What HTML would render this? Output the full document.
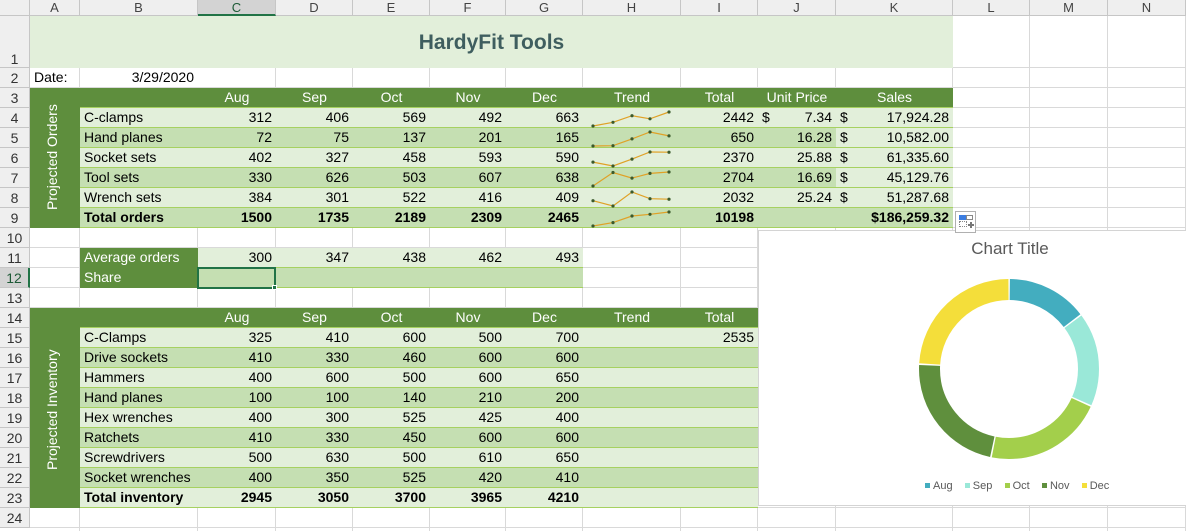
<!DOCTYPE html>
<html><head><meta charset="utf-8">
<style>
*{margin:0;padding:0;box-sizing:border-box}
html,body{width:1186px;height:531px;overflow:hidden}
body{background:#fff;font-family:"Liberation Sans",Arial,sans-serif;font-size:14px;color:#000;position:relative}
.a{position:absolute}
.vl{position:absolute;top:0;width:1px;height:531px;background:#d9d9d9}
.hl{position:absolute;left:0;height:1px;width:1186px;background:#d9d9d9}
.hdr{position:absolute;top:0;left:0;width:1186px;height:16px;background:#efefef;border-bottom:1px solid #c6c6c6}
.ch{position:absolute;top:0;height:16px;line-height:16px;text-align:center;font-size:13px;color:#444;border-right:1px solid #c6c6c6}
.rh{position:absolute;left:0;width:30px;background:#efefef;border-right:1px solid #c6c6c6;border-bottom:1px solid #c6c6c6;text-align:center;font-size:14px;color:#333;line-height:20px}
.row{position:absolute;left:0;width:1186px;height:20px;line-height:19px}
.row span{position:absolute;top:0;height:20px;white-space:nowrap;padding:0 4px}
.R{text-align:right}.C{text-align:center}
.cB{left:80px;width:118px}.cC{left:198px;width:78px}.cD{left:276px;width:77px}.cE{left:353px;width:77px}.cF{left:430px;width:76px}.cG{left:506px;width:77px}.cH{left:583px;width:98px}.cI{left:681px;width:77px}.cJ{left:758px;width:78px}.cK{left:836px;width:117px}
.dk{background:#5e8e3d}.lt{background:#e2efda;border-bottom:1px solid #a6d160}.md{background:#c5dfb2;border-bottom:1px solid #a6d160}
.w{color:#fff}.b{font-weight:bold}
</style></head><body>
<div class="vl" style="left:79px"></div><div class="vl" style="left:197px"></div><div class="vl" style="left:275px"></div><div class="vl" style="left:352px"></div><div class="vl" style="left:429px"></div><div class="vl" style="left:505px"></div><div class="vl" style="left:582px"></div><div class="vl" style="left:680px"></div><div class="vl" style="left:757px"></div><div class="vl" style="left:835px"></div><div class="vl" style="left:952px"></div><div class="vl" style="left:1029px"></div><div class="vl" style="left:1107px"></div><div class="vl" style="left:1185px"></div>
<div class="hl" style="top:67px"></div><div class="hl" style="top:87px"></div><div class="hl" style="top:107px"></div><div class="hl" style="top:127px"></div><div class="hl" style="top:147px"></div><div class="hl" style="top:167px"></div><div class="hl" style="top:187px"></div><div class="hl" style="top:207px"></div><div class="hl" style="top:227px"></div><div class="hl" style="top:247px"></div><div class="hl" style="top:267px"></div><div class="hl" style="top:287px"></div><div class="hl" style="top:307px"></div><div class="hl" style="top:327px"></div><div class="hl" style="top:347px"></div><div class="hl" style="top:367px"></div><div class="hl" style="top:387px"></div><div class="hl" style="top:407px"></div><div class="hl" style="top:427px"></div><div class="hl" style="top:447px"></div><div class="hl" style="top:467px"></div><div class="hl" style="top:487px"></div><div class="hl" style="top:507px"></div><div class="hl" style="top:527px"></div>

<div class="hdr"></div>
<div class="ch" style="left:0;width:30px"></div>
<div class="ch" style="left:30px;width:50px">A</div><div class="ch" style="left:80px;width:118px">B</div><div class="ch" style="left:198px;width:78px;background:#d3d3d3;border-bottom:2px solid #217346;color:#1d5a36">C</div><div class="ch" style="left:276px;width:77px">D</div><div class="ch" style="left:353px;width:77px">E</div><div class="ch" style="left:430px;width:76px">F</div><div class="ch" style="left:506px;width:77px">G</div><div class="ch" style="left:583px;width:98px">H</div><div class="ch" style="left:681px;width:77px">I</div><div class="ch" style="left:758px;width:78px">J</div><div class="ch" style="left:836px;width:117px">K</div><div class="ch" style="left:953px;width:77px">L</div><div class="ch" style="left:1030px;width:78px">M</div><div class="ch" style="left:1108px;width:78px">N</div>

<div class="rh" style="top:16px;height:52px;line-height:86px">1</div>
<div class="rh" style="top:68px;height:20px">2</div><div class="rh" style="top:88px;height:20px">3</div><div class="rh" style="top:108px;height:20px">4</div><div class="rh" style="top:128px;height:20px">5</div><div class="rh" style="top:148px;height:20px">6</div><div class="rh" style="top:168px;height:20px">7</div><div class="rh" style="top:188px;height:20px">8</div><div class="rh" style="top:208px;height:20px">9</div><div class="rh" style="top:228px;height:20px">10</div><div class="rh" style="top:248px;height:20px">11</div><div class="rh" style="top:268px;height:20px;background:#d3d3d3;border-right:2px solid #217346;color:#1d5a36">12</div><div class="rh" style="top:288px;height:20px">13</div><div class="rh" style="top:308px;height:20px">14</div><div class="rh" style="top:328px;height:20px">15</div><div class="rh" style="top:348px;height:20px">16</div><div class="rh" style="top:368px;height:20px">17</div><div class="rh" style="top:388px;height:20px">18</div><div class="rh" style="top:408px;height:20px">19</div><div class="rh" style="top:428px;height:20px">20</div><div class="rh" style="top:448px;height:20px">21</div><div class="rh" style="top:468px;height:20px">22</div><div class="rh" style="top:488px;height:20px">23</div><div class="rh" style="top:508px;height:20px">24</div>

<div class="a" style="left:30px;top:16px;width:923px;height:52px;background:#e2efda;text-align:center;line-height:54px;font-size:21px;font-weight:bold;color:#3f5e5f">HardyFit Tools</div>
<div class="row" style="top:68px"><span style="left:30px;width:50px">Date:</span><span class="cB R" style="background:#fff;height:19px">3/29/2020</span></div>

<div class="a dk" style="left:30px;top:88px;width:50px;height:140px"></div>
<div class="a dk" style="left:80px;top:88px;width:873px;height:20px;border-bottom:1px solid #a6d160"></div>
<div class="a lt" style="left:80px;top:108px;width:873px;height:20px"></div>
<div class="a md" style="left:80px;top:128px;width:756px;height:20px"></div><div class="a lt" style="left:836px;top:128px;width:117px;height:20px"></div>
<div class="a lt" style="left:80px;top:148px;width:873px;height:20px"></div>
<div class="a md" style="left:80px;top:168px;width:756px;height:20px"></div><div class="a lt" style="left:836px;top:168px;width:117px;height:20px"></div>
<div class="a lt" style="left:80px;top:188px;width:873px;height:20px"></div>
<div class="a md" style="left:80px;top:208px;width:873px;height:20px"></div>
<div class="a w" style="left:44px;top:210px;width:20px;height:16px;transform-origin:0 0;transform:rotate(-90deg);white-space:nowrap;font-size:14px;line-height:16px">Projected Orders</div>

<div class="row w" style="top:88px"><span class="cC C">Aug</span><span class="cD C">Sep</span><span class="cE C">Oct</span><span class="cF C">Nov</span><span class="cG C">Dec</span><span class="cH C">Trend</span><span class="cI C">Total</span><span class="cJ C">Unit Price</span><span class="cK C">Sales</span></div>
<div class="row" style="top:108px"><span class="cB">C-clamps</span><span class="cC R">312</span><span class="cD R">406</span><span class="cE R">569</span><span class="cF R">492</span><span class="cG R">663</span><span class="cI R">2442</span><span class="cJ">$</span><span class="cJ R">7.34</span><span class="cK">$</span><span class="cK R">17,924.28</span></div>
<div class="row" style="top:128px"><span class="cB">Hand planes</span><span class="cC R">72</span><span class="cD R">75</span><span class="cE R">137</span><span class="cF R">201</span><span class="cG R">165</span><span class="cI R">650</span><span class="cJ R">16.28</span><span class="cK">$</span><span class="cK R">10,582.00</span></div>
<div class="row" style="top:148px"><span class="cB">Socket sets</span><span class="cC R">402</span><span class="cD R">327</span><span class="cE R">458</span><span class="cF R">593</span><span class="cG R">590</span><span class="cI R">2370</span><span class="cJ R">25.88</span><span class="cK">$</span><span class="cK R">61,335.60</span></div>
<div class="row" style="top:168px"><span class="cB">Tool sets</span><span class="cC R">330</span><span class="cD R">626</span><span class="cE R">503</span><span class="cF R">607</span><span class="cG R">638</span><span class="cI R">2704</span><span class="cJ R">16.69</span><span class="cK">$</span><span class="cK R">45,129.76</span></div>
<div class="row" style="top:188px"><span class="cB">Wrench sets</span><span class="cC R">384</span><span class="cD R">301</span><span class="cE R">522</span><span class="cF R">416</span><span class="cG R">409</span><span class="cI R">2032</span><span class="cJ R">25.24</span><span class="cK">$</span><span class="cK R">51,287.68</span></div>
<div class="row b" style="top:208px"><span class="cB">Total orders</span><span class="cC R">1500</span><span class="cD R">1735</span><span class="cE R">2189</span><span class="cF R">2309</span><span class="cG R">2465</span><span class="cI R">10198</span><span class="cK R">$186,259.32</span></div>

<svg class="a" style="left:0;top:0" width="1186" height="531">
<g fill="none" stroke="#e0a126" stroke-width="1.2">
<polyline points="593,126 613,122.3 632,115.7 650,118.8 669,112"/>
<polyline points="593,146 613,145.7 632,138.9 650,132 669,135.9"/>
<polyline points="593,162.1 613,166 632,159.1 650,152 669,152.2"/>
<polyline points="593,186 613,172.5 632,178.1 650,173.4 669,172"/>
<polyline points="593,200.7 613,206 632,192 650,198.7 669,199.2"/>
<polyline points="593,226 613,222.6 632,216 650,214.3 669,212"/>
</g>
<g fill="#3b5a2c">
<circle cx="593" cy="126" r="1.6"/><circle cx="613" cy="122.3" r="1.6"/><circle cx="632" cy="115.7" r="1.6"/><circle cx="650" cy="118.8" r="1.6"/><circle cx="669" cy="112" r="1.6"/>
<circle cx="593" cy="146" r="1.6"/><circle cx="613" cy="145.7" r="1.6"/><circle cx="632" cy="138.9" r="1.6"/><circle cx="650" cy="132" r="1.6"/><circle cx="669" cy="135.9" r="1.6"/>
<circle cx="593" cy="162.1" r="1.6"/><circle cx="613" cy="166" r="1.6"/><circle cx="632" cy="159.1" r="1.6"/><circle cx="650" cy="152" r="1.6"/><circle cx="669" cy="152.2" r="1.6"/>
<circle cx="593" cy="186" r="1.6"/><circle cx="613" cy="172.5" r="1.6"/><circle cx="632" cy="178.1" r="1.6"/><circle cx="650" cy="173.4" r="1.6"/><circle cx="669" cy="172" r="1.6"/>
<circle cx="593" cy="200.7" r="1.6"/><circle cx="613" cy="206" r="1.6"/><circle cx="632" cy="192" r="1.6"/><circle cx="650" cy="198.7" r="1.6"/><circle cx="669" cy="199.2" r="1.6"/>
<circle cx="593" cy="226" r="1.6"/><circle cx="613" cy="222.6" r="1.6"/><circle cx="632" cy="216" r="1.6"/><circle cx="650" cy="214.3" r="1.6"/><circle cx="669" cy="212" r="1.6"/>
</g>
</svg>

<div class="a dk" style="left:80px;top:248px;width:118px;height:40px"></div>
<div class="a lt" style="left:198px;top:248px;width:385px;height:20px"></div>
<div class="a md" style="left:198px;top:268px;width:385px;height:20px"></div>
<div class="row" style="top:248px"><span class="cB w">Average orders</span><span class="cC R">300</span><span class="cD R">347</span><span class="cE R">438</span><span class="cF R">462</span><span class="cG R">493</span></div>
<div class="row" style="top:268px"><span class="cB w">Share</span></div>
<div class="a" style="left:197px;top:267px;width:79px;height:22px;border:2px solid #217346"></div>
<div class="a" style="left:272px;top:285px;width:5px;height:5px;background:#217346;border:1px solid #fff"></div>

<div class="a dk" style="left:30px;top:308px;width:50px;height:200px"></div>
<div class="a dk" style="left:80px;top:308px;width:678px;height:20px;border-bottom:1px solid #a6d160"></div>
<div class="a lt" style="left:80px;top:328px;width:678px;height:20px"></div>
<div class="a md" style="left:80px;top:348px;width:678px;height:20px"></div>
<div class="a lt" style="left:80px;top:368px;width:678px;height:20px"></div>
<div class="a md" style="left:80px;top:388px;width:678px;height:20px"></div>
<div class="a lt" style="left:80px;top:408px;width:678px;height:20px"></div>
<div class="a md" style="left:80px;top:428px;width:678px;height:20px"></div>
<div class="a lt" style="left:80px;top:448px;width:678px;height:20px"></div>
<div class="a md" style="left:80px;top:468px;width:678px;height:20px"></div>
<div class="a lt" style="left:80px;top:488px;width:678px;height:20px"></div>
<div class="a w" style="left:44px;top:470px;width:20px;height:16px;transform-origin:0 0;transform:rotate(-90deg);white-space:nowrap;font-size:14px;line-height:16px">Projected Inventory</div>

<div class="row w" style="top:308px"><span class="cC C">Aug</span><span class="cD C">Sep</span><span class="cE C">Oct</span><span class="cF C">Nov</span><span class="cG C">Dec</span><span class="cH C">Trend</span><span class="cI C">Total</span></div>
<div class="row" style="top:328px"><span class="cB">C-Clamps</span><span class="cC R">325</span><span class="cD R">410</span><span class="cE R">600</span><span class="cF R">500</span><span class="cG R">700</span><span class="cI R">2535</span></div>
<div class="row" style="top:348px"><span class="cB">Drive sockets</span><span class="cC R">410</span><span class="cD R">330</span><span class="cE R">460</span><span class="cF R">600</span><span class="cG R">600</span></div>
<div class="row" style="top:368px"><span class="cB">Hammers</span><span class="cC R">400</span><span class="cD R">600</span><span class="cE R">500</span><span class="cF R">600</span><span class="cG R">650</span></div>
<div class="row" style="top:388px"><span class="cB">Hand planes</span><span class="cC R">100</span><span class="cD R">100</span><span class="cE R">140</span><span class="cF R">210</span><span class="cG R">200</span></div>
<div class="row" style="top:408px"><span class="cB">Hex wrenches</span><span class="cC R">400</span><span class="cD R">300</span><span class="cE R">525</span><span class="cF R">425</span><span class="cG R">400</span></div>
<div class="row" style="top:428px"><span class="cB">Ratchets</span><span class="cC R">410</span><span class="cD R">330</span><span class="cE R">450</span><span class="cF R">600</span><span class="cG R">600</span></div>
<div class="row" style="top:448px"><span class="cB">Screwdrivers</span><span class="cC R">500</span><span class="cD R">630</span><span class="cE R">500</span><span class="cF R">610</span><span class="cG R">650</span></div>
<div class="row" style="top:468px"><span class="cB">Socket wrenches</span><span class="cC R">400</span><span class="cD R">350</span><span class="cE R">525</span><span class="cF R">420</span><span class="cG R">410</span></div>
<div class="row b" style="top:488px"><span class="cB">Total inventory</span><span class="cC R">2945</span><span class="cD R">3050</span><span class="cE R">3700</span><span class="cF R">3965</span><span class="cG R">4210</span></div>

<div class="a" style="left:758px;top:230px;width:430px;height:276px;background:#fff;border:1px solid #d4d4d4"></div>
<div class="a" style="left:955px;top:211px;width:21px;height:22px;background:#fff;border:1px solid #b0b0b0">
<div class="a" style="left:3px;top:3px;width:7px;height:5px;background:#3c7de0"></div>
<div class="a" style="left:10px;top:3px;width:7px;height:5px;border:1px solid #888"></div>
<div class="a" style="left:3px;top:9px;width:8px;height:6px;border:1px dotted #888"></div>
<div class="a" style="left:12px;top:12px;width:6px;height:2px;background:#777"></div>
<div class="a" style="left:14px;top:10px;width:2px;height:6px;background:#777"></div>
</div>
<div class="a" style="left:910px;top:239px;width:200px;text-align:center;font-size:17px;color:#595959">Chart Title</div>
<svg class="a" style="left:909px;top:269px" width="200" height="200">
<g fill="none" stroke-width="21" transform="rotate(-90 100 100)">
<circle cx="100" cy="100" r="79.5" stroke="#43adbf" stroke-dasharray="72 500" stroke-dashoffset="-0.8"/>
<circle cx="100" cy="100" r="79.5" stroke="#9ae8d8" stroke-dasharray="83.5 500" stroke-dashoffset="-74.3"/>
<circle cx="100" cy="100" r="79.5" stroke="#a3cf4b" stroke-dasharray="105.7 500" stroke-dashoffset="-159.3"/>
<circle cx="100" cy="100" r="79.5" stroke="#5f8f3d" stroke-dasharray="111.6 500" stroke-dashoffset="-266.5"/>
<circle cx="100" cy="100" r="79.5" stroke="#f4de3a" stroke-dasharray="119.2 500" stroke-dashoffset="-379.6"/>
</g>
</svg>
<div class="a" style="left:925px;top:479px;font-size:11px;color:#595959;white-space:nowrap;line-height:14px">
<span style="display:inline-block;width:5px;height:5px;background:#43adbf;margin-right:3px;vertical-align:1px"></span>Aug&nbsp;&nbsp;&nbsp;
<span style="display:inline-block;width:5px;height:5px;background:#9ae8d8;margin-right:3px;vertical-align:1px"></span>Sep&nbsp;&nbsp;&nbsp;
<span style="display:inline-block;width:5px;height:5px;background:#a3cf4b;margin-right:3px;vertical-align:1px"></span>Oct&nbsp;&nbsp;&nbsp;
<span style="display:inline-block;width:5px;height:5px;background:#5f8f3d;margin-right:3px;vertical-align:1px"></span>Nov&nbsp;&nbsp;&nbsp;
<span style="display:inline-block;width:5px;height:5px;background:#f4de3a;margin-right:3px;vertical-align:1px"></span>Dec
</div>
</body></html>
